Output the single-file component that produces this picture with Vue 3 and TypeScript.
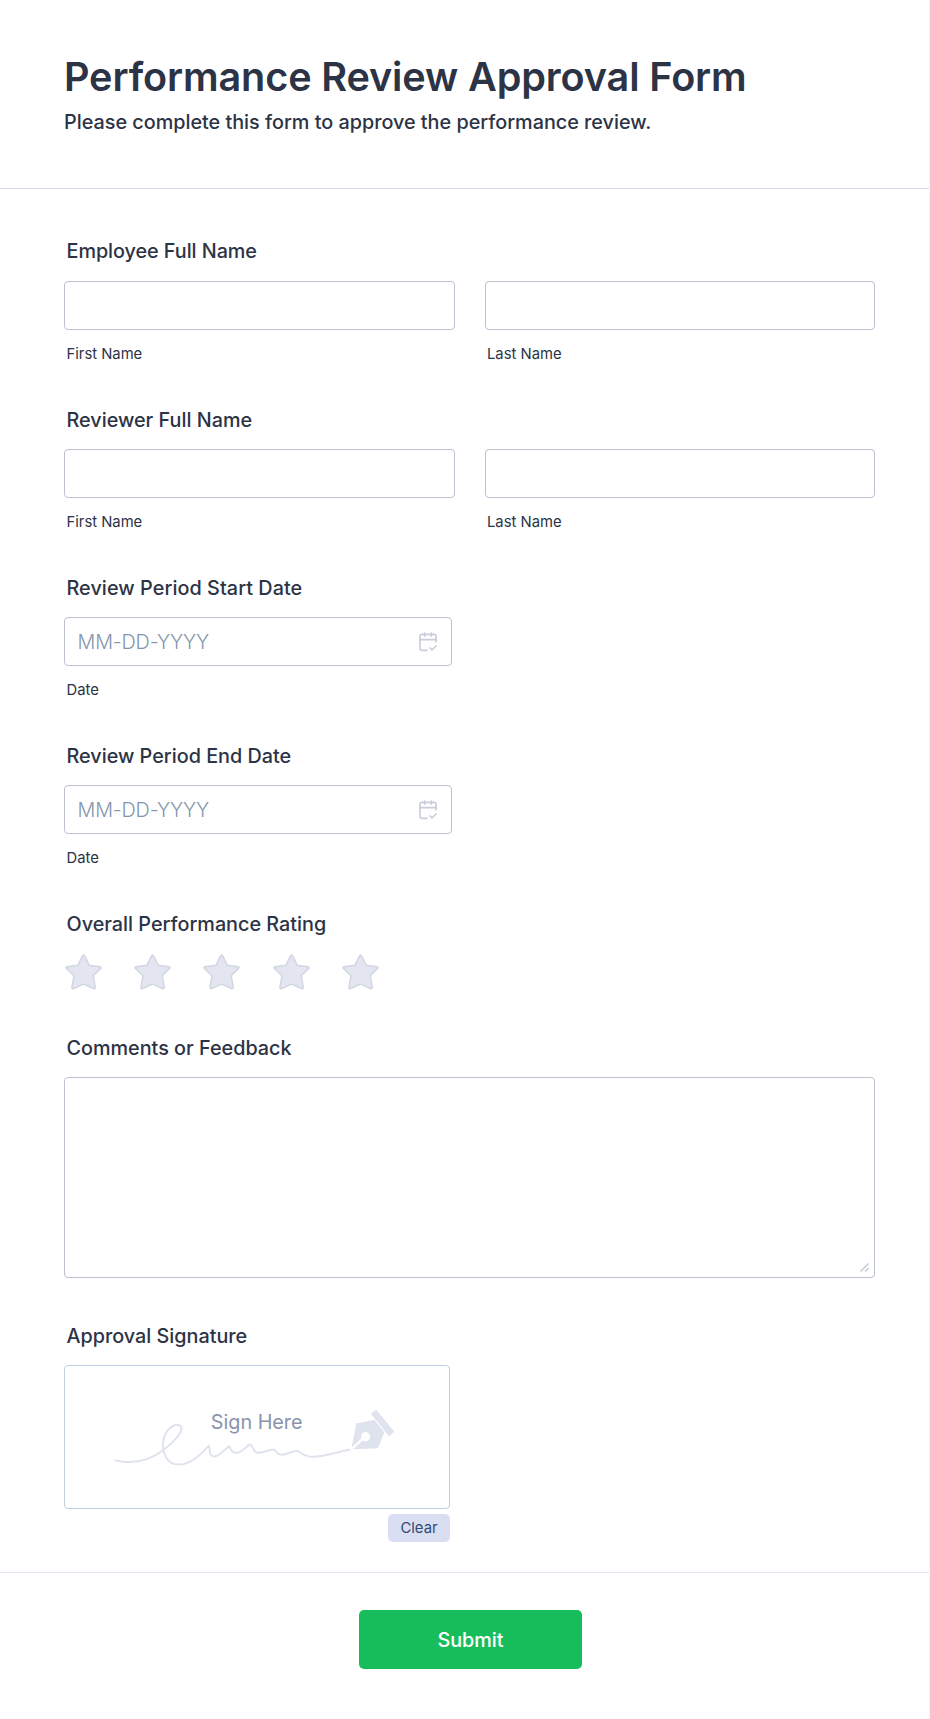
<script setup lang="ts">
import { ref } from 'vue'

interface NameQuestion {
  id: string
  label: string
  parts: string[]
}

interface DateQuestion {
  id: string
  label: string
}

const nameQuestions: NameQuestion[] = [
  { id: 'employee', label: 'Employee Full Name', parts: ['First Name', 'Last Name'] },
  { id: 'reviewer', label: 'Reviewer Full Name', parts: ['First Name', 'Last Name'] },
]

const dateQuestions: DateQuestion[] = [
  { id: 'start', label: 'Review Period Start Date' },
  { id: 'end', label: 'Review Period End Date' },
]

const rating = ref<number>(0)
const comments = ref<string>('')
</script>

<template>
  <form class="form" @submit.prevent>
    <header class="header">
      <h1 class="title">Performance Review Approval Form</h1>
      <p class="subtitle">Please complete this form to approve the performance review.</p>
    </header>

    <main class="questions">
      <section v-for="q in nameQuestions" :key="q.id" class="question" :class="q.id">
        <h2 class="label">{{ q.label }}</h2>
        <div class="name-row">
          <label v-for="part in q.parts" :key="part" class="field">
            <input class="box" type="text" />
            <span class="sublabel">{{ part }}</span>
          </label>
        </div>
      </section>

      <section v-for="q in dateQuestions" :key="q.id" class="question" :class="q.id">
        <h2 class="label">{{ q.label }}</h2>
        <label class="field date-field">
          <span class="date-box">
            <input class="date-input" type="text" placeholder="MM-DD-YYYY" />
            <svg class="calendar" viewBox="0 0 54 60" fill="none" stroke="#c9cddb" stroke-width="5" stroke-linecap="round" stroke-linejoin="round">
              <path d="M24 55H9Q3 55 3 49V13Q3 7 9 7H45Q51 7 51 13V30" />
              <path d="M3 23H51M17 3V13M37 3V13" />
              <path d="M33 48L39 54L51 42" />
            </svg>
          </span>
          <span class="sublabel">Date</span>
        </label>
      </section>

      <section class="question rating">
        <h2 class="label">Overall Performance Rating</h2>
        <div class="stars">
          <button v-for="n in 5" :key="n" class="star" type="button" :aria-label="`${n} stars`" @click="rating = n">
            <svg viewBox="0 0 112 108" :class="{ lit: n <= rating }">
              <path d="M56 3Q58 3 60 7L73 34L105 38Q111 39 107 43L85 65L91 99Q91 106 86 104L56 90L26 104Q20 106 21 99L27 65L4 43Q1 39 6 38L39 34L52 7Q54 3 56 3Z" />
            </svg>
          </button>
        </div>
      </section>

      <section class="question comments">
        <h2 class="label">Comments or Feedback</h2>
        <div class="textarea-wrap">
          <textarea v-model="comments" class="box area"></textarea>
          <svg class="grip" viewBox="0 0 9 9" fill="none" stroke="#c3c8d8" stroke-width="1.4">
            <path d="M0.5 8.5L8.5 0.5M5 8.5L8.5 5" />
          </svg>
        </div>
      </section>

      <section class="signature">
        <h2 class="label">Approval Signature</h2>
        <div class="pad">
          <svg class="pad-art" viewBox="43 135 1157 431">
            <g fill="none" stroke="#dfe3ed" stroke-width="6" stroke-linecap="round" stroke-linejoin="round">
              <path d="M198 421C255 434 305 418 344 387C376 362 405 330 392 317C378 308 351 322 342 355C333 398 352 433 388 433C424 433 453 402 477 377C484 383 472 407 494 409C514 407 524 384 539 379C542 383 543 400 562 398C580 396 590 375 601 373C612 378 607 399 627 398C648 397 657 386 674 389C682 397 684 404 695 404C711 404 722 393 742 392C756 398 762 410 790 410C823 408 861 396 898 389" />
            </g>
            <g fill="#dfe3ed">
              <path d="M963 281L979 269L1033 335L1017 348Z" />
              <path fill-rule="evenodd" d="M919 310L974 299L1003 337L984 384L909 387L939 361A14 14 0 1 0 934 355L905 382Z" />
            </g>
            <text class="sign-here" x="483" y="327" textLength="275">Sign Here</text>
          </svg>
        </div>
        <div class="pad-actions">
          <button class="clear" type="button">Clear</button>
        </div>
      </section>
    </main>

    <footer class="footer">
      <button class="submit" type="submit">Submit</button>
    </footer>
  </form>
</template>

<style>
body {
  margin: 0;
  background: #fff;
}
</style>

<style scoped>
.form {
  box-sizing: border-box;
  width: 930px;
  height: 1719px;
  display: flex;
  flex-direction: column;
  background: #fff;
  border-right: 1px solid #f5f6fb;
  color: #2c3345;
  font-family: Inter, "Liberation Sans", sans-serif;
}

.form * {
  box-sizing: border-box;
}

.header {
  height: 189px;
  padding: 52px 64px 0;
  border-bottom: 1px solid #d3d9e8;
}

.title {
  margin: 0;
  font-size: 39.6px;
  line-height: 50px;
  font-weight: 600;
  letter-spacing: -0.12px;
  white-space: nowrap;
}

.subtitle {
  margin: 6px 0 0;
  font-size: 19.8px;
  line-height: 28px;
  font-weight: 500;
  white-space: nowrap;
}

.questions {
  height: 1383px;
  padding: 48px 54px 0 64px;
}

.question {
  height: 168px;
}

.label {
  margin: 0 0 15px;
  padding-left: 2.5px;
  font-size: 19.8px;
  line-height: 28px;
  font-weight: 500;
  white-space: nowrap;
}

.question.employee {
  height: 169px;
}

.employee .label {
  margin-bottom: 16px;
  letter-spacing: -0.05px;
}

.start .label {
  letter-spacing: 0.07px;
}

.name-row {
  display: grid;
  grid-template-columns: 1fr 1fr;
  gap: 30px;
}

.field {
  display: flex;
  flex-direction: column;
}

.box,
.date-box {
  width: 100%;
  height: 49px;
  margin: 0;
  border: 1px solid #bcc1d0;
  border-radius: 4px;
  background: #fff;
  outline: none;
}

.box {
  display: block;
  padding: 0 12px;
  font: 400 19.8px Inter, sans-serif;
}

.sublabel {
  margin-top: 14px;
  padding-left: 2.5px;
  font-size: 14.8px;
  line-height: 20px;
}

.date-field {
  width: 388px;
}

.date-box {
  display: flex;
  align-items: center;
  justify-content: space-between;
  padding: 0 14px 0 12.5px;
}

.date-input {
  width: 250px;
  padding: 0;
  border: 0;
  outline: none;
  background: none;
  font: 300 19.8px/28px Inter, sans-serif;
  letter-spacing: -0.17px;
  color: #2c3345;
}

.date-input::placeholder {
  color: #8496ad;
  opacity: 1;
}

.calendar {
  width: 18px;
  height: 20px;
}

.question.rating {
  height: 124px;
}

.rating .label {
  margin-bottom: 16px;
}

.stars {
  display: flex;
  gap: 32px;
  padding-left: 1px;
}

.star {
  width: 37.2px;
  height: 36px;
  padding: 0;
  border: 0;
  background: none;
}

.star svg {
  display: block;
  width: 37.2px;
  height: 36px;
  fill: #e3e6f0;
  stroke: #d2d6e0;
  stroke-width: 4.5;
}

.star svg.lit {
  fill: #fbc02d;
}

.question.comments {
  height: 288px;
}

.textarea-wrap {
  position: relative;
}

.area {
  height: 201px;
  resize: none;
}

.grip {
  position: absolute;
  right: 6px;
  bottom: 6px;
  width: 9px;
  height: 9px;
}

.pad {
  width: 386px;
  height: 144px;
  border: 1px solid #bfcfe2;
  border-radius: 4px;
}

.pad-art {
  display: block;
  width: 386px;
  height: 144px;
  margin: -1px;
}

.sign-here {
  font-size: 59.4px;
  font-weight: 400;
  fill: #8894ab;
}

.pad-actions {
  display: flex;
  justify-content: flex-end;
  width: 386px;
  margin-top: 5px;
}

.clear {
  width: 62px;
  height: 28px;
  padding: 0;
  border: 0;
  border-radius: 5px;
  background: #dadef3;
  color: #2e4a73;
  font: 400 14.8px/28px Inter, sans-serif;
}

.footer {
  display: flex;
  justify-content: center;
  align-items: flex-start;
  flex: 1;
  padding: 37px 0 0 12px;
  border-top: 1px solid #e5e7f2;
}

.submit {
  width: 223px;
  height: 59px;
  padding: 1px 0 0;
  border: 0;
  border-radius: 5px;
  background: #18bd5b;
  color: #fff;
  font: 500 19.8px/58px Inter, sans-serif;
}
</style>
